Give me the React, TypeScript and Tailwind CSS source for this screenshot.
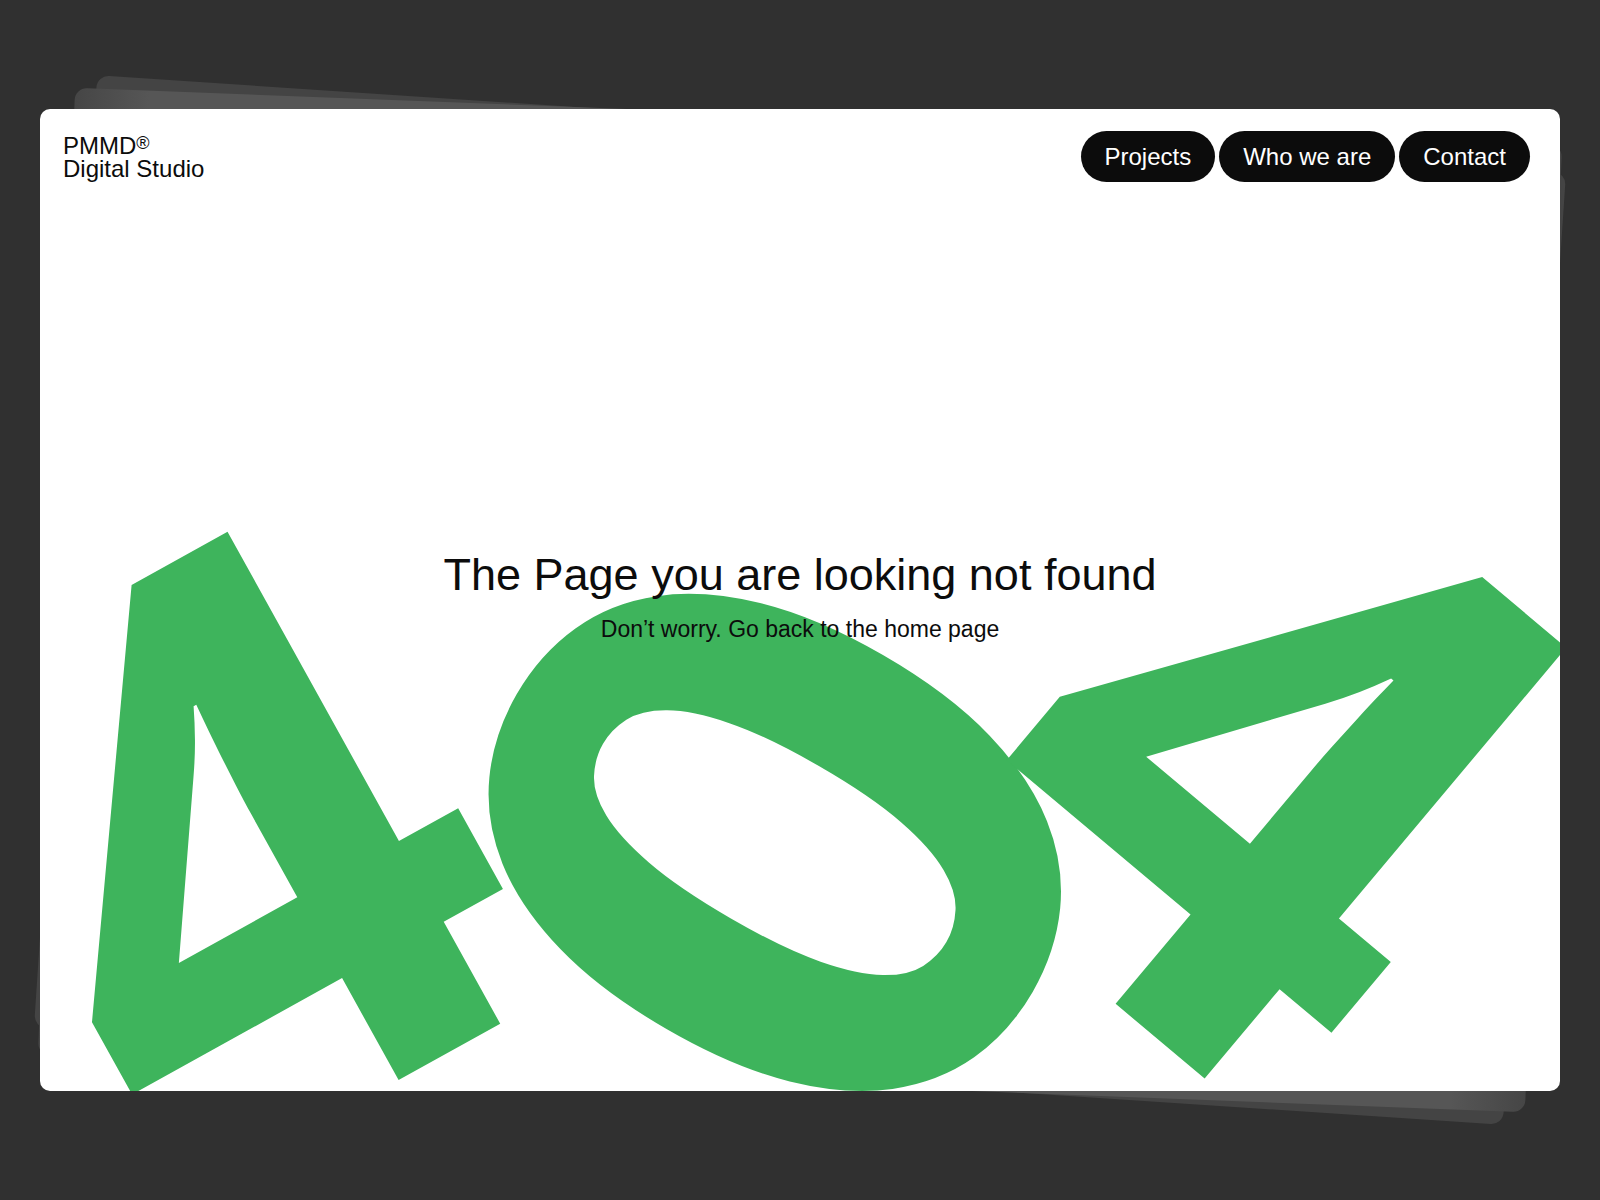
const links = ['Projects', 'Who we are', 'Contact'];

function Backdrop() {
  return (
    <>
      <div className="absolute inset-x-6 inset-y-[14px] rotate-[3.8deg] rounded-xl bg-[#444444]" />
      <div className="absolute inset-x-4 inset-y-[7px] rotate-[2.2deg] rounded-xl bg-[linear-gradient(90deg,#464646,#565656_5%,#565656_95%,#464646)]" />
    </>
  );
}

/* The three tumbled digits lying on the floor of the card. */
function FallenDigits() {
  return (
    <div className="absolute inset-0 overflow-hidden rounded-[10px] leading-none text-[#3eb45c] select-none">
      <span className="absolute top-[718px] left-[186px] -translate-x-1/2 -translate-y-1/2 -rotate-29 font-['Open_Sans',sans-serif] text-[788px] font-bold">
        4
      </span>
      <span className="absolute top-[724px] left-[719px] -translate-x-1/2 -translate-y-1/2 -rotate-60 font-['Lato',sans-serif] text-[800px] font-extrabold">
        0
      </span>
      <span className="absolute top-[643px] left-[1250px] -translate-x-1/2 -translate-y-1/2 rotate-40 font-['Open_Sans',sans-serif] text-[788px] font-bold">
        4
      </span>
    </div>
  );
}

function Header() {
  return (
    <header className="flex items-start justify-between pt-[22px] pr-[30px] pl-[23px]">
      <a href="#home" className="pt-[3px] text-2xl leading-[23px]">
        PMMD<sup className="top-0 align-[5px] text-lg leading-[0]">®</sup>
        <br />
        Digital Studio
      </a>
      <nav className="flex gap-1">
        {links.map((label) => (
          <a
            key={label}
            href={'#' + label.toLowerCase().replaceAll(' ', '-')}
            className="flex h-[51px] items-center rounded-full bg-[#0c0c0c] px-6 text-2xl text-white"
          >
            {label}
          </a>
        ))}
      </nav>
    </header>
  );
}

export default function App() {
  return (
    <div className="flex min-h-screen items-center overflow-hidden bg-[#303030] p-10 font-['Liberation_Sans',Arial,sans-serif] text-[#0c0c0c]">
      <div className="relative w-full">
        <Backdrop />
        <div className="relative grid aspect-[1520/982] w-full grid-rows-[1fr_auto_1fr] rounded-[10px] bg-white">
          <FallenDigits />
          <div className="relative">
            <Header />
          </div>
          <main className="relative pb-1.5 text-center">
            <h1 className="text-[45px] leading-[48px]">The Page you are looking not found</h1>
            <p className="mt-4 text-[23px] leading-7">
              Don’t worry. <a href="#home">Go back to the home page</a>
            </p>
          </main>
        </div>
      </div>
    </div>
  );
}
